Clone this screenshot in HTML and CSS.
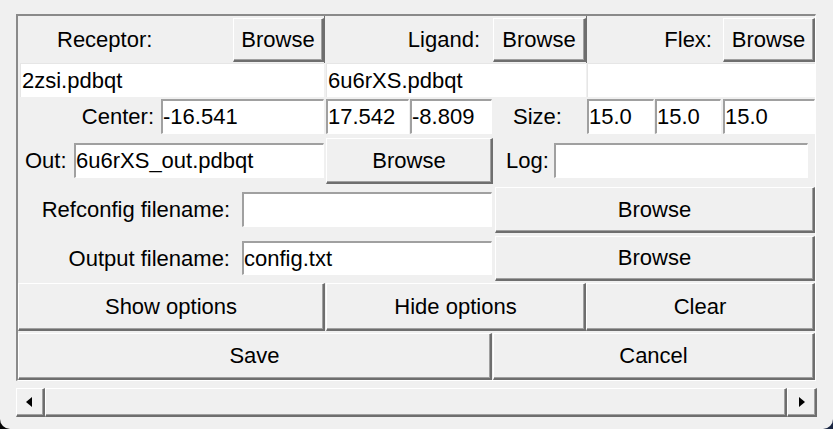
FILE: index.html
```html
<!DOCTYPE html>
<html>
<head>
<meta charset="utf-8">
<link rel="stylesheet" href="styles.css">
</head>
<body>
<div class="window">
  <div class="frame">
    <div class="row r1">
      <div class="hcell ca"><span class="lbl">Receptor:</span><div class="btn hbtn wa">Browse</div></div>
      <div class="hcell cb"><span class="lbl">Ligand:</span><div class="btn hbtn wb">Browse</div></div>
      <div class="hcell cc"><span class="lbl">Flex:</span><div class="btn hbtn wc">Browse</div></div>
    </div>
    <div class="row r2">
      <div class="fcell ca"><div class="entry flat">2zsi.pdbqt</div></div>
      <div class="fcell cb"><div class="entry flat">6u6rXS.pdbqt</div></div>
      <div class="fcell cc"><div class="entry flat"></div></div>
    </div>
    <div class="row r3">
      <div class="lbl center">Center:</div>
      <div class="entry e3 g2">-16.541</div>
      <div class="entry e3 g1">17.542</div>
      <div class="entry e3">-8.809</div>
      <div class="lbl size">Size:</div>
      <div class="entry e3 g1">15.0</div>
      <div class="entry e3 g2">15.0</div>
      <div class="entry e3">15.0</div>
    </div>
    <div class="row r4">
      <div class="lbl out">Out:</div>
      <div class="entry e4 g2">6u6rXS_out.pdbqt</div>
      <div class="btn b4">Browse</div>
      <div class="lbl log">Log:</div>
      <div class="entry e4"></div>
      <div></div>
    </div>
    <div class="row r5">
      <div class="lbl rlabel">Refconfig filename:</div>
      <div class="entry e5 g3"></div>
      <div class="btn b5">Browse</div>
    </div>
    <div class="row r6">
      <div class="lbl rlabel">Output filename:</div>
      <div class="entry e6 g3">config.txt</div>
      <div class="btn b6">Browse</div>
    </div>
    <div class="row r7">
      <div class="btn b7 g1">Show options</div>
      <div class="btn b7">Hide options</div>
      <div class="btn b7">Clear</div>
    </div>
    <div class="row r8">
      <div class="btn b8 g1">Save</div>
      <div class="btn b8">Cancel</div>
    </div>
  </div>
  <div class="scroll">
    <div class="sbtn sl"><span class="tri left"></span></div>
    <div class="sbtn trough"></div>
    <div class="sbtn sr"><span class="tri right"></span></div>
  </div>
</div>
</body>
</html>
```
FILE: styles.css
```css
html, body {
  margin: 0;
  padding: 0;
}
body {
  width: 833px;
  height: 429px;
  overflow: hidden;
  background: linear-gradient(90deg, #050505 0, #050505 50%, #1a2642 50%, #1a2642 100%);
  font-family: "Liberation Sans", Arial, sans-serif;
  font-size: 22px;
  color: #000;
}
.window {
  width: 833px;
  height: 429px;
  box-sizing: border-box;
  background: #f0f0f0;
  border-radius: 0 0 10px 10px;
  padding: 14px 0 0 16px;
}
.frame {
  width: 800px;
  box-sizing: border-box;
  border-top: 2px solid #8a8a8a;
  border-left: 2px solid #8a8a8a;
  border-right: 1px solid #fff;
  border-bottom: 1px solid #fff;
}
.row {
  display: grid;
  align-items: start;
}
.lbl {
  white-space: nowrap;
  line-height: 25px;
}
.btn {
  box-sizing: border-box;
  background: #f0f0f0;
  border-style: solid;
  border-width: 1px 2px 2px 1px;
  border-color: #fff #6e6e6e #6e6e6e #fff;
  box-shadow: inset -1px -1px 0 #a0a0a0;
  display: flex;
  align-items: center;
  justify-content: center;
  white-space: nowrap;
}
.entry {
  box-sizing: border-box;
  background: #fff;
  border-style: solid;
  border-width: 2px 1px 1px 2px;
  border-color: #a0a0a0 #fff #fff #a0a0a0;
  display: flex;
  align-items: center;
  white-space: nowrap;
  overflow: hidden;
}
.g1 { margin-right: 1px; }
.g2 { margin-right: 2px; }
.g3 { margin-right: 3px; }

/* row 1 : headers */
.r1 {
  grid-template-columns: 307px 262px 228px;
  height: 47px;
}
.hcell {
  display: flex;
  align-items: center;
  height: 47px;
  box-sizing: border-box;
}
.hcell.ca {
  justify-content: space-between;
  padding-left: 39px;
  border-right: 1px solid #6e6e6e;
}
.hcell.cb {
  justify-content: flex-end;
  border-right: 1px solid #6e6e6e;
}
.hcell.cb .lbl { margin-right: 13px; }
.hcell.cc { justify-content: flex-end; }
.hcell.cc .lbl { margin-right: 11px; }
.hbtn {
  height: 44px;
  align-self: flex-start;
  margin-top: 2px;
}
.wa { width: 91px; }
.wb { width: 93px; }
.wc { width: 92px; }

/* row 2 : file entries */
.r2 {
  grid-template-columns: 307px 262px 228px;
  height: 35px;
}
.fcell {
  height: 35px;
  box-sizing: border-box;
  display: flex;
}
.fcell.ca { padding: 0 1px 0 2px; }
.fcell.cb { padding: 0 1px 0 1px; }
.entry.flat {
  flex: 1;
  height: 34px;
  border-width: 1px 0 0 1px;
  border-color: #e6e6e6;
  padding-left: 1px;
}

/* row 3 : center / size */
.r3 {
  grid-template-columns: 143px 165px 84px 82px 95px 68px 68px 92px;
  height: 37px;
}
.r3 .entry { height: 35px; margin-top: 1px; }
.center { text-align: right; padding-right: 7px; margin-top: 6px; }
.size { padding-left: 21px; margin-top: 6px; }

/* row 4 : out / log */
.r4 {
  grid-template-columns: 56px 252px 167px 61px 254px 7px;
  height: 50px;
}
.out { padding-left: 7px; margin-top: 13px; }
.log { padding-left: 13px; margin-top: 13px; }
.e4 { height: 35px; margin-top: 8px; }
.b4 { height: 46px; margin-top: 3px; }

/* rows 5, 6 */
.r5 {
  grid-template-columns: 224px 253px 320px;
  height: 49px;
}
.r6 {
  grid-template-columns: 224px 253px 320px;
  height: 48px;
}
.rlabel { text-align: right; padding-right: 12px; margin-top: 12px; }
.e5 { height: 35px; margin-top: 7px; }
.b5 { height: 46px; margin-top: 2px; }
.e6 { height: 34px; margin-top: 7px; }
.b6 { height: 45px; margin-top: 2px; }
.r6 .rlabel { margin-top: 12px; }

/* row 7 */
.r7 {
  grid-template-columns: 308px 260px 229px;
  height: 50px;
}
.b7 { height: 48px; margin-top: 1px; }

/* row 8 */
.r8 {
  grid-template-columns: 475px 322px;
  height: 48px;
}
.b8 { height: 47px; margin-top: 1px; }

/* scrollbar */
.scroll {
  display: flex;
  width: 801px;
  height: 29px;
  margin-top: 7px;
}
.sbtn {
  box-sizing: border-box;
  height: 29px;
  background: #f0f0f0;
  border-style: solid;
  border-width: 1px 2px 2px 1px;
  border-color: #fff #6e6e6e #6e6e6e #fff;
  box-shadow: inset -1px -1px 0 #a0a0a0;
  display: flex;
  align-items: center;
  justify-content: center;
}
.sl { width: 29px; }
.sr { width: 30px; }
.trough { flex: 1; }
.tri {
  width: 0;
  height: 0;
  border-top: 5px solid transparent;
  border-bottom: 5px solid transparent;
}
.tri.left { border-right: 6px solid #000; margin-right: 3px; }
.tri.right { border-left: 6px solid #000; margin-left: 1px; }
```
